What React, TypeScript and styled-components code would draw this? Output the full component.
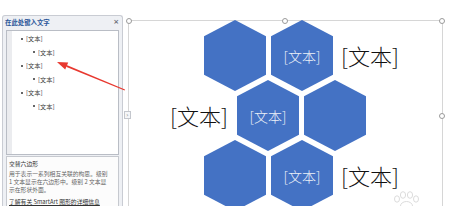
import { FC } from 'react'
import styled, { createGlobalStyle } from 'styled-components'

const cjk = `'Noto Sans CJK SC', 'Noto Sans', sans-serif`

const GlobalStyle = createGlobalStyle`
  html, body {
    margin: 0;
    padding: 0;
    background: #ffffff;
  }
  body {
    width: 451px;
    height: 206px;
    overflow: hidden;
    font-family: ${cjk};
  }
`

// Page row: text pane + slide canvas
const Page = styled.div`
  position: relative;
  display: flex;
  width: 451px;
  height: 206px;
  overflow: hidden;
`

// Left "type your text here" pane
const Pane = styled.div`
  box-sizing: border-box;
  display: flex;
  flex-direction: column;
  width: 121px;
  height: 191px;
  margin: 15px 0 0 2px;
  border: 1px solid #c9ccd3;
  border-bottom: none;
  border-radius: 3px 3px 0 0;
  background: #eef0f4;
`

const PaneHeader = styled.div`
  display: flex;
  align-items: center;
  justify-content: space-between;
  height: 14px;
  padding: 0 3px 0 2px;
`

const PaneTitle = styled.span`
  font-size: 6.4px;
  font-weight: bold;
  color: #2a5699;
`

const CloseIcon = styled.span`
  font-family: 'DejaVu Sans', sans-serif;
  font-size: 7px;
  font-weight: bold;
  color: #6b6f78;
  line-height: 1;
`

const TreeBox = styled.div`
  display: flex;
  height: 126px;
  margin: 0 3px;
  border: 1px solid #b9bdc5;
  background: #ffffff;
`

const Strip = styled.div`
  width: 5px;
  background: #ebecef;
`

const TreeList = styled.ul`
  list-style: none;
  margin: 0;
  padding: 1px 0 0 0;
  flex: 1;
`

const TreeRow = styled.li<{ $level: number }>`
  display: flex;
  align-items: center;
  gap: 3px;
  height: 13.6px;
  padding-left: ${p => (p.$level === 1 ? 9 : 21)}px;
  font-size: 6.2px;
  color: #3a3a3a;
`

const Bullet = styled.span`
  width: 2px;
  height: 2px;
  border-radius: 50%;
  background: #333333;
`

const DescBox = styled.div`
  flex: 1;
  margin: 1px 3px 0;
  padding: 3px 2px 0 2px;
  border: 1px solid #c6c9cf;
  border-bottom: none;
  background: #fcfcfc;
  font-size: 5.8px;
  line-height: 8px;
  color: #666666;
`

const DescTitle = styled.div`
  color: #333333;
  margin-bottom: 2px;
`

const DescLink = styled.div`
  margin-top: 4px;
  color: #333333;
  text-decoration: underline;
`

// Slide area with selection frame
const Frame = styled.div`
  box-sizing: border-box;
  position: relative;
  width: 315px;
  height: 186px;
  margin: 20px 0 0 5px;
  border: 1px solid #d6d6d6;
  border-bottom: none;
`

const Hex = styled.div<{ $x: number; $y: number }>`
  position: absolute;
  left: ${p => p.$x}px;
  top: ${p => p.$y}px;
  width: 62px;
  height: 71px;
  display: flex;
  align-items: center;
  justify-content: center;
  background: #4472c4;
  clip-path: polygon(50% 0, 100% 23%, 100% 77%, 50% 100%, 0 77%, 0 23%);
  font-size: 14px;
  font-weight: 300;
  color: #edf1f8;
`

const Label = styled.div<{ $x: number; $y: number }>`
  position: absolute;
  left: ${p => p.$x}px;
  top: ${p => p.$y}px;
  font-size: 22px;
  font-weight: 300;
  line-height: 26px;
  color: #111111;
`

const Handle = styled.span<{ $x: number; $y: number }>`
  position: absolute;
  left: ${p => p.$x}px;
  top: ${p => p.$y}px;
  box-sizing: border-box;
  width: 6px;
  height: 6px;
  border: 1px solid #9a9a9a;
  border-radius: 50%;
  background: #ffffff;
`

const Collapse = styled.div`
  position: absolute;
  left: 124px;
  top: 111px;
  box-sizing: border-box;
  width: 7px;
  height: 8px;
  border: 1px solid #c4c7cd;
  background: #f5f6f8;
  font-family: 'DejaVu Sans', sans-serif;
  font-size: 6px;
  line-height: 6px;
  text-align: center;
  color: #777777;
`

const Overlay = styled.svg`
  position: absolute;
  left: 0;
  top: 0;
  pointer-events: none;
`

const treeRows = [1, 2, 1, 2, 1, 2]

const hexes = [
  { x: 75, y: -1, text: '' },
  { x: 142, y: -1, text: '[文本]' },
  { x: 108, y: 59, text: '[文本]' },
  { x: 175, y: 59, text: '' },
  { x: 75, y: 119, text: '' },
  { x: 142, y: 119, text: '[文本]' },
]

const labels = [
  { x: 212, y: 21 },
  { x: 41, y: 81 },
  { x: 212, y: 141 },
]

const handles = [
  { x: -3.5, y: -3.5 },
  { x: 153, y: -3.5 },
  { x: 310, y: -3.5 },
  { x: 310, y: 92 },
]

const TextPane: FC = () => (
  <Pane>
    <PaneHeader>
      <PaneTitle>在此处键入文字</PaneTitle>
      <CloseIcon>×</CloseIcon>
    </PaneHeader>
    <TreeBox>
      <Strip />
      <TreeList>
        {treeRows.map((level, i) => (
          <TreeRow key={i} $level={level}>
            <Bullet />
            [文本]
          </TreeRow>
        ))}
      </TreeList>
    </TreeBox>
    <DescBox>
      <DescTitle>交替六边形</DescTitle>
      <div>用于表示一系列相互关联的构思。级别</div>
      <div>1 文本显示在六边形中。级别 2 文本显</div>
      <div>示在形状外面。</div>
      <DescLink>了解有关 SmartArt 图形的详细信息</DescLink>
    </DescBox>
  </Pane>
)

const App: FC = () => (
  <Page>
    <GlobalStyle />
    <TextPane />
    <Frame>
      {hexes.map((h, i) => (
        <Hex key={i} $x={h.x} $y={h.y}>{h.text}</Hex>
      ))}
      {labels.map((l, i) => (
        <Label key={i} $x={l.x} $y={l.y}>[文本]</Label>
      ))}
      {handles.map((h, i) => (
        <Handle key={i} $x={h.x} $y={h.y} />
      ))}
    </Frame>
    <Collapse>›</Collapse>
    <Overlay width="451" height="206" viewBox="0 0 451 206">
      {/* red pointer arrow */}
      <polygon points="125,89.6 124.6,90.6 66.6,67 65.4,64.6" fill="#e8382f" />
      <polygon points="57,62 68.2,62.4 65.2,69.6" fill="#e8382f" />
      {/* faint watermark paw */}
      <g fill="none" stroke="#dcdcdc" strokeWidth="1">
        <ellipse cx="397" cy="199" rx="2.5" ry="3.2" />
        <ellipse cx="403" cy="195" rx="2.6" ry="3.3" />
        <ellipse cx="410" cy="195" rx="2.6" ry="3.3" />
        <ellipse cx="416" cy="199" rx="2.5" ry="3.2" />
        <ellipse cx="406.5" cy="206" rx="6" ry="4.5" />
      </g>
    </Overlay>
  </Page>
)

export default App
